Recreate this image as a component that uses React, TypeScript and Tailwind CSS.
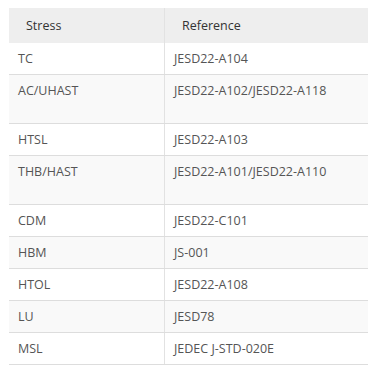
import React from 'react';

const rows: { stress: string; reference: string; tall?: boolean }[] = [
  { stress: 'TC', reference: 'JESD22-A104' },
  { stress: 'AC/UHAST', reference: 'JESD22-A102/JESD22-A118', tall: true },
  { stress: 'HTSL', reference: 'JESD22-A103' },
  { stress: 'THB/HAST', reference: 'JESD22-A101/JESD22-A110', tall: true },
  { stress: 'CDM', reference: 'JESD22-C101' },
  { stress: 'HBM', reference: 'JS-001' },
  { stress: 'HTOL', reference: 'JESD22-A108' },
  { stress: 'LU', reference: 'JESD78' },
  { stress: 'MSL', reference: 'JEDEC J-STD-020E' },
];

const App = () => {
  return (
    <div className="w-[369px] h-[378px] bg-white pt-2 pl-[9px] font-['Open_Sans',sans-serif] text-[12.5px] leading-[17px]">
      <div className="w-[359px]">
        {/* Header */}
        <div className="grid grid-cols-[155px_1fr] h-[35px] bg-[#eeeeee] text-[#333333]">
          <div className="pt-[9px] pl-[17px]">Stress</div>
          <div className="pt-[9px] pl-[17px] border-l border-[#e2e2e2]">Reference</div>
        </div>

        {/* Body */}
        <div className="text-[#555555]">
          {rows.map((r, i) => (
            <div
              key={r.stress}
              className={`grid grid-cols-[155px_1fr] border-b border-[#dddddd] ${r.tall ? 'h-[49px]' : 'h-[32px]'} ${i % 2 === 1 ? 'bg-[#f9f9f9]' : 'bg-white'}`}
            >
              <div className="pt-[7px] px-[9px]">{r.stress}</div>
              <div className="pt-[7px] px-[9px] border-l border-[#e2e2e2]">{r.reference}</div>
            </div>
          ))}
        </div>
      </div>
    </div>
  );
};

export default App;
